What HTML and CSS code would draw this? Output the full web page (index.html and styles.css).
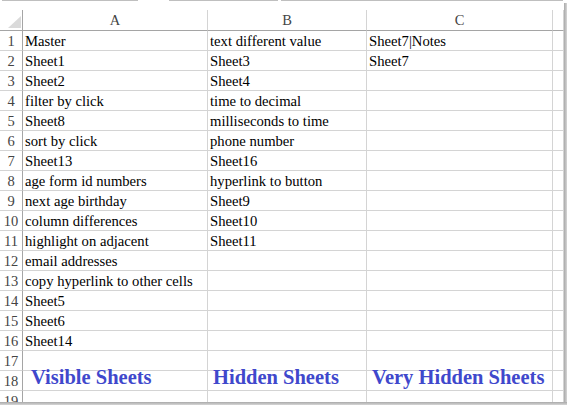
FILE: index.html
```
<!DOCTYPE html>
<html>
	<head>
		<meta charset="UTF-8">
		<title>Sheets</title>
		<link rel="stylesheet" href="styles.css">
	</head>
	<body>
		
		<!--外框-->
		<div class="frame">
			
			<!--顶部残留的细线-->
			<div class="topline">
				<span class="seg seg1"></span>
				<span class="seg seg2"></span>
				<span class="seg seg3"></span>
			</div>
			
			<div class="main">
				<div class="sheet">
					<div class="grid">
						<!--表头-->
						<div class="corner"><i class="tri"></i></div>
						<div class="colhead">A</div>
						<div class="colhead">B</div>
						<div class="colhead">C</div>
						<div class="colhead"></div>
						
						<div class="rowhead">1</div><div class="cell">Master</div><div class="cell">text different value</div><div class="cell">Sheet7|Notes</div><div class="cell"></div>
						<div class="rowhead">2</div><div class="cell">Sheet1</div><div class="cell">Sheet3</div><div class="cell">Sheet7</div><div class="cell"></div>
						<div class="rowhead">3</div><div class="cell">Sheet2</div><div class="cell">Sheet4</div><div class="cell"></div><div class="cell"></div>
						<div class="rowhead">4</div><div class="cell">filter by click</div><div class="cell">time to decimal</div><div class="cell"></div><div class="cell"></div>
						<div class="rowhead">5</div><div class="cell">Sheet8</div><div class="cell">milliseconds to time</div><div class="cell"></div><div class="cell"></div>
						<div class="rowhead">6</div><div class="cell">sort by click</div><div class="cell">phone number</div><div class="cell"></div><div class="cell"></div>
						<div class="rowhead">7</div><div class="cell">Sheet13</div><div class="cell">Sheet16</div><div class="cell"></div><div class="cell"></div>
						<div class="rowhead">8</div><div class="cell">age form id numbers</div><div class="cell">hyperlink to button</div><div class="cell"></div><div class="cell"></div>
						<div class="rowhead">9</div><div class="cell">next age birthday</div><div class="cell">Sheet9</div><div class="cell"></div><div class="cell"></div>
						<div class="rowhead">10</div><div class="cell">column differences</div><div class="cell">Sheet10</div><div class="cell"></div><div class="cell"></div>
						<div class="rowhead">11</div><div class="cell">highlight on adjacent</div><div class="cell">Sheet11</div><div class="cell"></div><div class="cell"></div>
						<div class="rowhead">12</div><div class="cell">email addresses</div><div class="cell"></div><div class="cell"></div><div class="cell"></div>
						<div class="rowhead">13</div><div class="cell">copy hyperlink to other cells</div><div class="cell"></div><div class="cell"></div><div class="cell"></div>
						<div class="rowhead">14</div><div class="cell">Sheet5</div><div class="cell"></div><div class="cell"></div><div class="cell"></div>
						<div class="rowhead">15</div><div class="cell">Sheet6</div><div class="cell"></div><div class="cell"></div><div class="cell"></div>
						<div class="rowhead">16</div><div class="cell">Sheet14</div><div class="cell"></div><div class="cell"></div><div class="cell"></div>
						<div class="rowhead">17</div><div class="cell"></div><div class="cell"></div><div class="cell"></div><div class="cell"></div>
						<div class="rowhead">18</div><div class="cell label first">Visible Sheets</div><div class="cell label">Hidden Sheets</div><div class="cell label">Very Hidden Sheets</div><div class="cell"></div>
						<div class="rowhead">19</div><div class="cell"></div><div class="cell"></div><div class="cell"></div><div class="cell"></div>
					</div>
				</div>
				<!--右侧阴影-->
				<div class="rshadow"></div>
			</div>
			
			<!--底部阴影-->
			<div class="bshadow"></div>
			
		</div>
		
	</body>
</html>
```

FILE: styles.css
```
/*去除默认样式*/
*{
	margin: 0;
	padding: 0;
	box-sizing: border-box;
}

body{
	background-color: #fff;
}

/*外框*/
.frame{
	width: 567px;
	height: 405px;
	display: flex;
	flex-direction: column;
	overflow: hidden;
	font-family: "Liberation Serif", "DejaVu Serif", serif;
}

/*顶部细线*/
.topline{
	height: 1px;
	display: flex;
}

.seg{
	height: 1px;
	background-color: #bfbfbf;
}

.seg1{
	margin-left: 2px;
	width: 136px;
}

.seg2{
	margin-left: 31px;
	width: 109px;
}

.seg3{
	margin-left: 3px;
	width: 282px;
}

.main{
	height: 401px;
	display: flex;
}

.sheet{
	width: 564px;
	padding-top: 9px;
	overflow: hidden;
}

.rshadow{
	width: 3px;
	margin-top: 2px;
	background: linear-gradient(to right, #a9a9a9, #d6d6d6);
}

.bshadow{
	height: 3px;
	background: linear-gradient(to bottom, #a9a9a9, #d6d6d6);
}

/*表格*/
.grid{
	display: grid;
	grid-template-columns: 23px 185px 159px 186px 11px;
	grid-template-rows: 21px;
	grid-auto-rows: 20px;
}

.grid > div{
	border-right: 1px solid #d4d4d4;
	border-bottom: 1px solid #d4d4d4;
}

/*左上角*/
.grid > .corner{
	border-right-color: #a5a5a5;
	border-bottom-color: #a5a5a5;
	display: flex;
	justify-content: flex-end;
	align-items: flex-end;
	padding: 0 1px 2px 0;
}

.tri{
	width: 13px;
	height: 12px;
	background-color: #dadada;
	clip-path: polygon(100% 0, 100% 100%, 0 100%);
}

/*列标题*/
.grid > .colhead{
	border-bottom-color: #a5a5a5;
	text-align: center;
	font-size: 14.5px;
	line-height: 20px;
	color: #444;
}

/*行号*/
.grid > .rowhead{
	border-right-color: #a5a5a5;
	display: flex;
	justify-content: center;
	align-items: flex-end;
	font-size: 14.5px;
	line-height: 17px;
	color: #444;
}

/*单元格*/
.cell{
	display: flex;
	align-items: flex-end;
	padding-left: 2px;
	font-size: 14.67px;
	line-height: 17px;
	color: #000;
	white-space: nowrap;
}

/*第18行的标签*/
.label{
	font-size: 20.5px;
	font-weight: bold;
	line-height: normal;
	color: #4048cc;
	padding-left: 5px;
	padding-bottom: 1px;
}

.first{
	padding-left: 8px;
}
```
